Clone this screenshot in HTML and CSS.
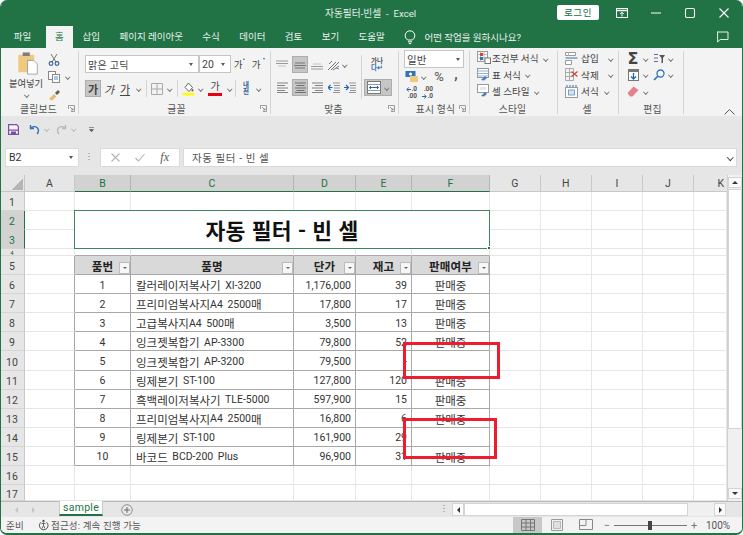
FILE: index.html
```html
<!DOCTYPE html>
<html lang="ko">
<head>
<meta charset="utf-8">
<title>자동필터-빈셀 - Excel</title>
<link rel="stylesheet" href="styles.css">
</head>
<body>
<div class="window">

  <header class="titlebar">
    <div class="doc-title">자동필터-빈셀 &nbsp;-&nbsp; Excel</div>
    <div class="login">로그인</div>
    <div class="winbtn first"><svg width="14" height="12" viewBox="0 0 14 12"><rect x="1.5" y="1.5" width="11" height="9" fill="none" stroke="#fff"/><path d="M1.5 3.5h11" stroke="#fff" stroke-width="1.5"/><path d="M7 9.5V5.5M5.2 7L7 5.2 8.8 7" fill="none" stroke="#fff"/></svg></div>
    <div class="winbtn"><svg width="12" height="12" viewBox="0 0 12 12"><path d="M1 6h10" stroke="#fff" stroke-width="1.2"/></svg></div>
    <div class="winbtn"><svg width="12" height="12" viewBox="0 0 12 12"><rect x="1.5" y="1.5" width="9" height="9" rx="1.5" fill="none" stroke="#fff" stroke-width="1.1"/></svg></div>
    <div class="winbtn"><svg width="12" height="12" viewBox="0 0 12 12"><path d="M1.5 1.5l9 9M10.5 1.5l-9 9" stroke="#fff" stroke-width="1.1"/></svg></div>
  </header>

  <nav class="tabs">
    <div class="tab">파일</div>
    <div class="tab home">홈</div>
    <div class="tab">삽입</div>
    <div class="tab">페이지 레이아웃</div>
    <div class="tab">수식</div>
    <div class="tab">데이터</div>
    <div class="tab">검토</div>
    <div class="tab">보기</div>
    <div class="tab">도움말</div>
    <div class="tell">
      <svg width="12" height="15" viewBox="0 0 12 15"><path d="M3.6 10C2.6 8.8 1.2 7.8 1.2 5.6a4.8 4.8 0 0 1 9.6 0c0 2.2-1.4 3.2-2.4 4.4z" fill="none" stroke="#fff"/><path d="M4 11.8h4M4.8 13.6h2.4" stroke="#fff"/></svg>
      <span>어떤 작업을 원하시나요?</span>
    </div>
    <div class="comment"><svg width="13" height="12" viewBox="0 0 13 12"><path d="M1 1h11v7.5H4.2L1.6 11V1z" fill="none" stroke="#e8f0ea"/></svg></div>
  </nav>

  <section class="ribbon">
    <div class="grp clip">
      <div class="grp-body clip-body">
        <div class="paste">
          <svg width="22" height="23" viewBox="0 0 24 26"><rect x="1" y="3" width="18" height="20" rx="1" fill="#f0c981"/><rect x="6" y="0.5" width="8" height="4" fill="#7d7d7d"/><path d="M11.5 9.5h7l4 4v11.5h-11z" fill="#fff" stroke="#8a8a8a" stroke-width=".8"/></svg>
          <div class="paste-text">붙여넣기</div>
          <i class="chev"></i>
        </div>
        <div class="clip-tools">
          <svg width="12" height="13" viewBox="0 0 12 13"><path d="M3 1l5 8M9 1L4 9" stroke="#777" fill="none"/><circle cx="3" cy="10.5" r="1.9" fill="none" stroke="#2f5f93" stroke-width="1.1"/><circle cx="9" cy="10.5" r="1.9" fill="none" stroke="#2f5f93" stroke-width="1.1"/></svg>
          <div class="copy-row">
            <svg width="12" height="12" viewBox="0 0 12 12"><rect x=".5" y=".5" width="7" height="8" fill="#fff" stroke="#888"/><rect x="4.5" y="3.5" width="7" height="8" fill="#fff" stroke="#888"/><path d="M6 6h4M6 8h4" stroke="#5b8fc4"/></svg>
            <i class="chev"></i>
          </div>
          <svg width="13" height="12" viewBox="0 0 13 12"><path d="M1 10l5-5 2.5 2.5L4 11.5z" fill="#e9bb6e"/><path d="M7 4l3-3 2 2-3 3z" fill="#5c5c5c"/></svg>
        </div>
      </div>
      <div class="grp-label"><span></span><span>클립보드</span><svg class="launch" width="7" height="7" viewBox="0 0 7 7"><path d="M.5 4V.5H6.500V6.500H3M2 2l3 3M5 3v2H3" fill="none" stroke="#888" stroke-width=".8"/></svg></div>
    </div>

    <div class="grp font">
      <div class="grp-body">
        <div class="row font-row1">
          <div class="select fontname"><span>맑은 고딕</span><b class="tri"></b></div>
          <div class="select fontsize"><span>20</span><b class="tri"></b></div>
          <div class="slot w14 grow"><span>가</span><sup class="up"></sup></div>
          <div class="slot w22 grow"><span>가</span><sup class="down"></sup></div>
        </div>
        <div class="row font-row2">
          <div class="slot w16 tile bold">가</div>
          <div class="slot w16 italic">가</div>
          <div class="slot w16 under">가</div>
          <div class="slot w12"><i class="chev"></i></div>
          <div class="vsep ml1"></div>
          <div class="slot w19"><svg width="12" height="12" viewBox="0 0 12 12"><path d="M.5.5h11v11H.5zM6 .5v11M.5 6h11" fill="none" stroke="#aaa"/></svg></div>
          <div class="slot w8"><i class="chev"></i></div>
          <div class="vsep ml3"></div>
          <div class="slot w20"><svg width="13" height="14" viewBox="0 0 13 14"><path d="M6.500 1l4 4.500-3.500 4-4-4z" fill="#fff" stroke="#666"/><path d="M.5 11h12v2.500H.5z" fill="#ffff00"/><path d="M10.500 6.500c.8 1 1 1.500 1 2a1 1 0 0 1-2 0c0-.5.2-1 1-2z" fill="#666"/></svg></div>
          <div class="slot w5"><i class="chev"></i></div>
          <div class="slot w24 color"><span>가</span></div>
          <div class="slot w5"><i class="chev"></i></div>
          <div class="vsep ml3"></div>
          <div class="slot w20 phon"><span>내<br>천</span></div>
          <div class="slot w6"><i class="chev"></i></div>
        </div>
      </div>
      <div class="grp-label"><span></span><span>글꼴</span><svg class="launch" width="7" height="7" viewBox="0 0 7 7"><path d="M.5 4V.5H6.500V6.500H3M2 2l3 3M5 3v2H3" fill="none" stroke="#888" stroke-width=".8"/></svg></div>
    </div>

    <div class="grp align">
      <div class="grp-body align-body">
        <div class="align-main">
          <div class="row">
            <div class="slot w20"><svg width="12" height="10" viewBox="0 0 12 10"><path d="M0 1h12M0 3.500h12" stroke="#9a9a9a"/><path d="M2 6h8" stroke="#c4c4c4"/></svg></div>
            <div class="slot w16 tile"><svg width="12" height="10" viewBox="0 0 12 10"><path d="M1 3h10M0 5.500h12M1 8h10" stroke="#777"/></svg></div>
            <div class="slot w18"><svg width="12" height="10" viewBox="0 0 12 10"><path d="M2 4h8" stroke="#c4c4c4"/><path d="M0 6.500h12M0 9h12" stroke="#9a9a9a"/></svg></div>
            <div class="slot w16"><svg width="14" height="12" viewBox="0 0 14 12"><path d="M1 11L9 3M4 11l8-8M2 5l3-3M6 11l6-4" fill="none" stroke="#777"/><path d="M9 9l3 1" stroke="#5b8fc4"/></svg></div>
            <div class="slot w6"><i class="chev"></i></div>
          </div>
          <div class="row align-row2">
            <div class="slot w20"><svg width="11" height="11" viewBox="0 0 11 11"><path d="M0 1h11M0 3.500h8M0 6h11M0 8.500h8M0 10.500h11" stroke="#777" stroke-width=".9"/></svg></div>
            <div class="slot w16 tile"><svg width="11" height="11" viewBox="0 0 11 11"><path d="M0 1h11M1.500 3.500h8M0 6h11M1.500 8.500h8M0 10.500h11" stroke="#666" stroke-width=".9"/></svg></div>
            <div class="slot w18"><svg width="11" height="11" viewBox="0 0 11 11"><path d="M0 1h11M3 3.500h8M0 6h11M3 8.500h8M0 10.500h11" stroke="#777" stroke-width=".9"/></svg></div>
            <div class="slot w16"><svg width="12" height="11" viewBox="0 0 12 11"><path d="M5 1h7M6 3.500h6M6 6h6M6 8.500h6M5 10.500h7" stroke="#888" stroke-width=".9"/><path d="M0 5.500h4.500M2.500 3L0 5.500 2.500 8" fill="none" stroke="#1f66b0" stroke-width="1.200"/></svg></div>
            <div class="slot w15"><svg width="12" height="11" viewBox="0 0 12 11"><path d="M5 1h7M6 3.500h6M6 6h6M6 8.500h6M5 10.500h7" stroke="#888" stroke-width=".9"/><path d="M0 5.500h4.500M2 3l2.500 2.500L2 8" fill="none" stroke="#1f66b0" stroke-width="1.200"/></svg></div>
          </div>
        </div>
        <div class="vsep tall"></div>
        <div class="align-side">
          <div class="wrap-ic"><span>가나</span><span class="wrap-b">다↵</span></div>
          <div class="merge tile">
            <svg width="14" height="13" viewBox="0 0 14 13"><rect x=".5" y=".5" width="13" height="12" fill="#fff" stroke="#777"/><path d="M.5 3.500h13M.5 9.500h13" stroke="#999"/><path d="M2.500 6.500h9" stroke="#1f66b0"/><path d="M4 5L2.500 6.500 4 8M10 5l1.500 1.500L10 8" fill="none" stroke="#1f66b0"/></svg>
            <i class="chev"></i>
          </div>
        </div>
      </div>
      <div class="grp-label"><span></span><span>맞춤</span><svg class="launch" width="7" height="7" viewBox="0 0 7 7"><path d="M.5 4V.5H6.500V6.500H3M2 2l3 3M5 3v2H3" fill="none" stroke="#888" stroke-width=".8"/></svg></div>
    </div>

    <div class="grp number">
      <div class="grp-body number-body">
        <div class="select numfmt"><span>일반</span><b class="tri"></b></div>
        <div class="row number-row">
          <div class="slot w14"><svg width="13" height="12" viewBox="0 0 13 12"><rect x=".5" y="1" width="10" height="6" fill="#2f75b5"/><circle cx="5.500" cy="4" r="1.600" fill="#fff"/><rect x="5" y="6" width="8" height="6" fill="#f0c981"/></svg></div>
          <div class="slot w12"><i class="chev"></i></div>
          <div class="slot w18 pct">%</div>
          <div class="slot w16 comma">,</div>
        </div>
        <div class="row number-row">
          <div class="slot w16 deci">
            <span class="deci-line"><svg width="5" height="5" viewBox="0 0 5 5"><path d="M5 2.500H.8M2.800.6L.8 2.500l2 1.900" fill="none" stroke="#1f66b0"/></svg>.0</span>
            <span class="deci-line">.00</span>
          </div>
          <div class="slot w16 deci">
            <span class="deci-line">.00</span>
            <span class="deci-line"><svg width="5" height="5" viewBox="0 0 5 5"><path d="M0 2.500h4.200M2.200.6l2 1.900-2 1.900" fill="none" stroke="#1f66b0"/></svg>.0</span>
          </div>
        </div>
      </div>
      <div class="grp-label"><span></span><span>표시 형식</span><svg class="launch" width="7" height="7" viewBox="0 0 7 7"><path d="M.5 4V.5H6.500V6.500H3M2 2l3 3M5 3v2H3" fill="none" stroke="#888" stroke-width=".8"/></svg></div>
    </div>

    <div class="grp style">
      <div class="grp-body list-body">
        <div class="item"><svg width="14" height="13" viewBox="0 0 14 13"><rect x=".5" y=".5" width="10" height="10" fill="#fff" stroke="#999"/><path d="M3.500.5v10M7 .5v10M.5 3.500h10M.5 7h10" stroke="#bbb"/><rect x="3" y="2" width="3" height="3" fill="#d04a3a"/><rect x="3" y="6" width="3" height="3" fill="#2f75b5"/><rect x="8" y="7" width="5.500" height="5.500" fill="#fff" stroke="#777"/></svg><span>조건부 서식</span><i class="chev"></i></div>
        <div class="item"><svg width="14" height="13" viewBox="0 0 14 13"><rect x=".5" y=".5" width="11" height="9" fill="#fff" stroke="#999"/><path d="M.5 3h11M.5 5.500h11M.5 8h11" stroke="#8fb4d9"/><path d="M4 12l4-4 2 2-3 2.500z" fill="#4d7fb5"/></svg><span>표 서식</span><i class="chev"></i></div>
        <div class="item"><svg width="14" height="13" viewBox="0 0 14 13"><rect x=".5" y=".5" width="11" height="8" fill="#fff" stroke="#999"/><path d="M3 3h6v3H3z" fill="#dfe7ef"/><path d="M4 12l4-4 2 2-3 2.500z" fill="#4d7fb5"/></svg><span>셀 스타일</span><i class="chev"></i></div>
      </div>
      <div class="grp-label"><span></span><span>스타일</span><span></span></div>
    </div>

    <div class="grp cells">
      <div class="grp-body list-body">
        <div class="item"><svg width="13" height="13" viewBox="0 0 13 13"><path d="M.5.5h10v3H.5zM.5 8.500h6v4h-6z" fill="#fff" stroke="#999"/><path d="M.5 6h12" stroke="#2f75b5"/><path d="M3.500.5v3" stroke="#bbb"/></svg><span>삽입</span><i class="chev"></i></div>
        <div class="item"><svg width="13" height="13" viewBox="0 0 13 13"><path d="M.5.500h8v12h-8zM.5 4.500h8M.5 8.500h8M4.500.5v12" fill="none" stroke="#aaa"/><path d="M6.500 3.500l6 5M12.500 3.500l-6 5" stroke="#d04a3a" stroke-width="1.300"/></svg><span>삭제</span><i class="chev"></i></div>
        <div class="item"><svg width="13" height="13" viewBox="0 0 13 13"><rect x=".5" y="2.500" width="12" height="10" fill="#fff" stroke="#999"/><rect x="3.500" y="5" width="6" height="5" fill="#d5e3f1" stroke="#4d7fb5" stroke-width=".7"/><path d="M1 1h11" stroke="#2f75b5" stroke-dasharray="2 1"/></svg><span>서식</span><i class="chev short"></i></div>
      </div>
      <div class="grp-label"><span></span><span>셀</span><span></span></div>
    </div>

    <div class="grp edit">
      <div class="grp-body edit-body">
        <div class="row edit-row">
          <div class="slot w18 sigma">Σ</div>
          <div class="slot w8"><i class="chev"></i></div>
          <div class="slot w18"><svg width="11" height="11" viewBox="0 0 11 11"><path d="M0 1.500h4M0 5h4M0 8.500h4" stroke="#7a5ea8"/><path d="M5 2h6L9 5v4.500L7.500 10.500V5z" fill="#555"/></svg></div>
          <div class="slot w6"><i class="chev"></i></div>
        </div>
        <div class="row edit-row">
          <div class="slot w18"><svg width="11" height="12" viewBox="0 0 11 12"><rect x=".5" y=".5" width="10" height="11" fill="#fff" stroke="#777"/><path d="M.5 2h10" stroke="#777" stroke-width="2"/><path d="M5.500 4v6M3 7.500l2.500 2.500L8 7.500" fill="none" stroke="#1f66b0" stroke-width="1.300"/></svg></div>
          <div class="slot w8"><i class="chev"></i></div>
          <div class="slot w18"><svg width="12" height="12" viewBox="0 0 12 12"><circle cx="7.500" cy="4.500" r="3.500" fill="none" stroke="#2f75b5" stroke-width="1.300"/><path d="M5 7L1 11" stroke="#2f75b5" stroke-width="1.700"/></svg></div>
          <div class="slot w6"><i class="chev"></i></div>
        </div>
        <div class="row edit-row">
          <div class="slot w18"><svg width="12" height="11" viewBox="0 0 12 11"><path d="M.5 7l6-6.500 5 3.500-6 6.500H3z" fill="#e8808c"/></svg></div>
          <div class="slot w8"><i class="chev"></i></div>
        </div>
      </div>
      <div class="grp-label"><span></span><span>편집</span><span></span></div>
    </div>

    <div class="collapse"><svg width="11" height="6" viewBox="0 0 11 6"><path d="M.5 5.500l5-5 5 5" fill="none" stroke="#555"/></svg></div>
  </section>

  <section class="strip">
    <div class="qat">
      <svg width="11" height="11" viewBox="0 0 11 11"><path d="M.6.6h8l1.800 1.800v8H.6z" fill="#f6f2fa" stroke="#7a4fa3" stroke-width="1.200"/><path d="M.6 6.200h9.800" stroke="#7a4fa3" stroke-width="1.200"/><path d="M3 7.500h5v3H3z" fill="#7a4fa3"/></svg>
      <svg class="undo" width="11" height="11" viewBox="0 0 11 11"><path d="M1.500 1v3.500H5M1.800 4.300C3 2.500 6 2 8 3.500c2 1.600 2 4.500 0 6.500" fill="none" stroke="#2f75b5" stroke-width="1.400"/></svg>
      <i class="chev faint"></i>
      <svg class="redo" width="11" height="11" viewBox="0 0 11 11"><path d="M9.500 1v3.500H6M9.200 4.300C8 2.500 5 2 3 3.500 1 5.100 1 8 3 10" fill="none" stroke="#b9b9b9" stroke-width="1.400"/></svg>
      <i class="chev faint"></i>
      <svg class="qat-more" width="5" height="5" viewBox="0 0 5 5"><path d="M0 .5h5M.5 2.500h4L2.500 4.800z" stroke="#555" stroke-width=".6" fill="#555"/></svg>
    </div>
    <div class="formula">
      <div class="namebox"><span>B2</span><b class="tri"></b></div>
      <div class="fdots"></div>
      <div class="fbtns">
        <svg width="9" height="9" viewBox="0 0 9 9"><path d="M.5.5l8 8M8.500.5l-8 8" stroke="#b5b5b5" stroke-width="1.100"/></svg>
        <svg width="10" height="9" viewBox="0 0 10 9"><path d="M.5 5l3 3L9.500 1" fill="none" stroke="#b5b5b5" stroke-width="1.100"/></svg>
        <span class="fx">fx</span>
      </div>
      <div class="finput"><span>자동 필터 - 빈 셀</span><i class="chev dark"></i></div>
    </div>
  </section>

  <section class="sheetwrap">
    <div class="sheet">
      <div class="corner"></div>
      <div class="ch">A</div>
      <div class="ch sel">B</div>
      <div class="ch sel">C</div>
      <div class="ch sel">D</div>
      <div class="ch sel">E</div>
      <div class="ch sel">F</div>
      <div class="ch">G</div>
      <div class="ch">H</div>
      <div class="ch">I</div>
      <div class="ch">J</div>
      <div class="ch kh">K</div>

      <div class="rh">1</div><div class="g"></div><div class="g"></div><div class="g"></div><div class="g"></div><div class="g"></div><div class="g"></div><div class="g"></div><div class="g"></div><div class="g"></div><div class="g"></div><div class="g"></div>
      <div class="rh rsel">2</div><div class="g"></div>
      <div class="merged">자동 필터 - 빈 셀</div>
      <div class="g"></div><div class="g"></div><div class="g"></div><div class="g"></div><div class="g"></div>
      <div class="rh rsel">3</div><div class="g"></div><div class="g"></div><div class="g"></div><div class="g"></div><div class="g"></div><div class="g"></div>
      <div class="rh r4">4</div><div class="g"></div><div class="g tb"></div><div class="g tb"></div><div class="g tb"></div><div class="g tb"></div><div class="g tb"></div><div class="g"></div><div class="g"></div><div class="g"></div><div class="g"></div><div class="g"></div>

      <div class="rh">5</div><div class="g tl"></div>
      <div class="t th">품번<b class="fbtn"></b></div><div class="t th">품명<b class="fbtn"></b></div><div class="t th">단가<b class="fbtn"></b></div><div class="t th">재고<b class="fbtn"></b></div><div class="t th">판매여부<b class="fbtn"></b></div>
      <div class="g"></div><div class="g"></div><div class="g"></div><div class="g"></div><div class="g"></div>

      <div class="rh">6</div><div class="g tl"></div>
      <div class="t ctr">1</div><div class="t txt"><span class="k">칼러레이저복사기</span> XI-3200</div><div class="t num">1,176,000</div><div class="t num">39</div><div class="t ctr"><span class="k">판매중</span></div>
      <div class="g"></div><div class="g"></div><div class="g"></div><div class="g"></div><div class="g"></div>

      <div class="rh">7</div><div class="g tl"></div>
      <div class="t ctr">2</div><div class="t txt"><span class="k">프리미엄복사지</span>A4 2500<span class="k">매</span></div><div class="t num">17,800</div><div class="t num">17</div><div class="t ctr"><span class="k">판매중</span></div>
      <div class="g"></div><div class="g"></div><div class="g"></div><div class="g"></div><div class="g"></div>

      <div class="rh">8</div><div class="g tl"></div>
      <div class="t ctr">3</div><div class="t txt"><span class="k">고급복사지</span>A4 500<span class="k">매</span></div><div class="t num">3,500</div><div class="t num">13</div><div class="t ctr"><span class="k">판매중</span></div>
      <div class="g"></div><div class="g"></div><div class="g"></div><div class="g"></div><div class="g"></div>

      <div class="rh">9</div><div class="g tl"></div>
      <div class="t ctr">4</div><div class="t txt"><span class="k">잉크젯복합기</span> AP-3300</div><div class="t num">79,800</div><div class="t num">52</div><div class="t ctr"><span class="k">판매중</span></div>
      <div class="g"></div><div class="g"></div><div class="g"></div><div class="g"></div><div class="g"></div>

      <div class="rh">10</div><div class="g tl"></div>
      <div class="t ctr">5</div><div class="t txt"><span class="k">잉크젯복합기</span> AP-3200</div><div class="t num">79,500</div><div class="t num">-</div><div class="t ctr"></div>
      <div class="g"></div><div class="g"></div><div class="g"></div><div class="g"></div><div class="g"></div>

      <div class="rh">11</div><div class="g tl"></div>
      <div class="t ctr">6</div><div class="t txt"><span class="k">링제본기</span> ST-100</div><div class="t num">127,800</div><div class="t num">120</div><div class="t ctr"><span class="k">판매중</span></div>
      <div class="g"></div><div class="g"></div><div class="g"></div><div class="g"></div><div class="g"></div>

      <div class="rh">12</div><div class="g tl"></div>
      <div class="t ctr">7</div><div class="t txt"><span class="k">흑백레이저복사기</span> TLE-5000</div><div class="t num">597,900</div><div class="t num">15</div><div class="t ctr"><span class="k">판매중</span></div>
      <div class="g"></div><div class="g"></div><div class="g"></div><div class="g"></div><div class="g"></div>

      <div class="rh">13</div><div class="g tl"></div>
      <div class="t ctr">8</div><div class="t txt"><span class="k">프리미엄복사지</span>A4 2500<span class="k">매</span></div><div class="t num">16,800</div><div class="t num">6</div><div class="t ctr"><span class="k">판매중</span></div>
      <div class="g"></div><div class="g"></div><div class="g"></div><div class="g"></div><div class="g"></div>

      <div class="rh">14</div><div class="g tl"></div>
      <div class="t ctr">9</div><div class="t txt"><span class="k">링제본기</span> ST-100</div><div class="t num">161,900</div><div class="t num">29</div><div class="t ctr"></div>
      <div class="g"></div><div class="g"></div><div class="g"></div><div class="g"></div><div class="g"></div>

      <div class="rh">15</div><div class="g tl"></div>
      <div class="t ctr">10</div><div class="t txt"><span class="k">바코드</span> BCD-200 Plus</div><div class="t num">96,900</div><div class="t num">31</div><div class="t ctr"><span class="k">판매중</span></div>
      <div class="g"></div><div class="g"></div><div class="g"></div><div class="g"></div><div class="g"></div>

      <div class="rh">16</div><div class="g"></div><div class="g"></div><div class="g"></div><div class="g"></div><div class="g"></div><div class="g"></div><div class="g"></div><div class="g"></div><div class="g"></div><div class="g"></div><div class="g"></div>
      <div class="rh">17</div><div class="g"></div><div class="g"></div><div class="g"></div><div class="g"></div><div class="g"></div><div class="g"></div><div class="g"></div><div class="g"></div><div class="g"></div><div class="g"></div><div class="g"></div>

      <div class="redbox one"></div>
      <div class="redbox two"></div>
    </div>
    <aside class="vscroll">
      <div class="sbtn"><b class="arr up"></b></div>
      <div class="vthumb"></div>
      <div class="sbtn"><b class="arr down"></b></div>
    </aside>
  </section>

  <section class="tabbar">
    <div class="tabnav"><b class="arr left faint"></b><b class="arr right faint"></b></div>
    <div class="sheettab">sample</div>
    <div class="addsheet"><svg width="12" height="12" viewBox="0 0 12 12"><circle cx="6" cy="6" r="5.300" fill="none" stroke="#888" stroke-width=".9"/><path d="M3.200 6h5.600M6 3.200v5.600" stroke="#666"/></svg></div>
    <div class="tdots"></div>
    <div class="hscroll">
      <div class="sbtn h"><b class="arr left"></b></div>
      <div class="hthumb"></div>
      <div class="sbtn h"><b class="arr right"></b></div>
    </div>
  </section>

  <footer class="status">
    <span class="ready">준비</span>
    <svg class="acc" width="11" height="12" viewBox="0 0 11 12"><path d="M3 3.200a4.300 4.300 0 1 0 5.500 0" fill="none" stroke="#555"/><circle cx="5.500" cy="2" r="1.200" fill="#555"/><path d="M5.500 3.500v3M3.500 4.500h4M5.500 6.500l-1.500 3M5.500 6.500l1.500 3" stroke="#555" stroke-width=".9" fill="none"/></svg>
    <span class="access">접근성: 계속 진행 가능</span>
    <div class="views">
      <div class="view on"><svg width="14" height="12" viewBox="0 0 14 12"><path d="M.5.500h13v11H.5zM.5 4h13M.5 8h13M5 .5v11M9.500.5v11" fill="none" stroke="#777"/></svg></div>
      <div class="view"><svg width="12" height="12" viewBox="0 0 12 12"><path d="M.5.500h11v11H.5z" fill="none" stroke="#999"/><path d="M2.500 2.500h7v7h-7z" fill="#e0e0e0" stroke="#aaa" stroke-width=".8"/></svg></div>
      <div class="view"><svg width="14" height="12" viewBox="0 0 14 12"><path d="M.5.500h13v10H.5zM7 .5v6M.5 6.500H7" fill="none" stroke="#888"/></svg></div>
    </div>
    <div class="zoom">
      <span class="zb">−</span>
      <div class="slider"><b></b></div>
      <span class="zb">+</span>
      <span class="pct-label">100%</span>
    </div>
  </footer>
</div>
</body>
</html>
```

FILE: styles.css
```css
* { box-sizing: border-box; }
html, body { margin: 0; padding: 0; background: #fff; }
body { font-family: Roboto, "Noto Sans CJK KR", sans-serif; font-size: 10px; color: #444; }
sup, b, i { display: block; }

.window {
  width: 743px; height: 535px; display: flex; flex-direction: column; overflow: hidden;
  background: #f3f3f3; border-left: 1px solid #217346; border-right: 1px solid #217346; border-bottom: 2px solid #217346;
  border-radius: 7px;
}

.titlebar { height: 25px; background: #217346; display: flex; align-items: center; color: #fff; flex: none; padding-left: 324px; }
.doc-title { width: 232px; font-size: 9.7px; color: #e4efe8; }
.login { width: 42px; height: 15px; background: #fff; color: #217346; border-radius: 2px; font-size: 9.5px; letter-spacing: .6px; text-align: center; line-height: 15px; }
.winbtn { width: 34px; height: 25px; display: flex; align-items: center; justify-content: center; }
.winbtn.first { margin-left: 6px; }

.tabs { height: 23px; background: #217346; display: flex; align-items: flex-end; color: #eaf2ed; flex: none; padding-left: 3px; font-size: 9.5px; }
.tab { height: 22px; line-height: 21px; padding: 0 9.7px; white-space: nowrap; }
.tab.home { background: #f3f3f3; color: #217346; margin-left: 5px; width: 27px; padding: 0; text-align: center; }
.tell { display: flex; align-items: center; height: 22px; margin-left: 10px; gap: 8px; }
.comment { margin-left: auto; margin-right: 13px; height: 22px; display: flex; align-items: center; }

.ribbon { height: 68px; flex: none; background: #f3f3f3; display: flex; position: relative; }
.grp { display: flex; flex-direction: column; margin: 3px 0 2px; border-right: 1px solid #d4d4d4; flex: none; }
.clip { width: 78px; }
.font { width: 192px; }
.align { width: 128px; }
.number { width: 71px; }
.style { width: 88px; }
.cells { width: 61px; }
.edit { width: 65px; }
.grp-body { flex: 1; min-height: 0; }
.grp-label { height: 13px; margin-bottom: -2px; display: grid; grid-template-columns: 1fr auto 1fr; align-items: center; font-size: 9.8px; color: #555; letter-spacing: .2px; line-height: 13px; padding-right: 2px; }
.launch { justify-self: end; margin-right: 1px; margin-bottom: 2px; }
.row { display: flex; align-items: center; }
.slot { display: flex; align-items: center; justify-content: center; height: 17px; flex: none; position: relative; }
.w5 { width: 5px; } .w6 { width: 6px; } .w8 { width: 8px; } .w12 { width: 12px; } .w14 { width: 14px; } .w15 { width: 15px; }
.w16 { width: 16px; } .w18 { width: 18px; } .w19 { width: 19px; } .w20 { width: 20px; } .w22 { width: 22px; } .w24 { width: 24px; }
.tile { background: #c6c6c6; border: 1px solid #adadad; }
.chev { width: 3.5px; height: 3.5px; border-right: 1px solid #777; border-bottom: 1px solid #777; transform: rotate(45deg); flex: none; }
.chev.faint { border-color: #bbb; }
.chev.dark { border-color: #444; width: 4.5px; height: 4.5px; }
.tri { width: 0; height: 0; border-left: 2.5px solid transparent; border-right: 2.5px solid transparent; border-top: 3px solid #555; margin-left: auto; }
.vsep { width: 1px; height: 17px; background: #d4d4d4; flex: none; }
.ml1 { margin-left: 1px; } .ml3 { margin-left: 3px; }

.clip-body { display: flex; padding-left: 16px; }
.paste { width: 30px; display: flex; flex-direction: column; align-items: flex-start; padding-top: 1px; }
.paste-text { white-space: nowrap; font-size: 9.3px; margin: 2px 0 0 -11px; line-height: 13px; width: 40px; text-align: center; flex: none; }
.paste .chev { margin: 3px 0 0 8px; }
.clip-tools { display: flex; flex-direction: column; align-items: flex-start; margin-left: 1px; padding-top: 2px; gap: 5px; }
.clip-tools > svg:last-child { margin-top: 1px; }
.copy-row { display: flex; align-items: center; gap: 6px; }

.font { padding-left: 6px; }
.font-row1 { margin-top: 4px; height: 18px; }
.select { background: #fff; border: 1px solid #c6c6c6; height: 18px; display: flex; align-items: center; padding: 0 5px 0 2px; font-size: 10px; flex: none; }
.fontname { width: 114px; letter-spacing: .3px; }
.fontsize { width: 32px; font-size: 10.5px; }
.grow { font-size: 9.5px; }
.grow sup { position: absolute; top: 2px; right: 0; width: 0; height: 0; border-left: 1.5px solid transparent; border-right: 1.5px solid transparent; }
.grow .up { border-bottom: 2.5px solid #2f75b5; }
.w22.grow .down { right: 2px; border-top: 2.5px solid #2f75b5; }
.font-row2 { margin-top: 7px; }
.bold { font-weight: 700; font-size: 11px; }
.italic { font-style: italic; font-size: 11px; }
.under { text-decoration: underline; font-size: 11px; }
.color span { font-size: 10px; border-bottom: 3px solid #e8000e; line-height: 10px; padding: 0 2px; height: 14px; width: 14px; text-align: center; }
.phon span { font-size: 6.5px; line-height: 7px; color: #2d5f8f; font-weight: 700; text-align: center; }

.align-body { display: flex; padding-top: 5px; }
.align-main { width: 90px; padding-left: 1px; }
.align-row2 { margin-top: 6px; }
.vsep.tall { height: 44px; margin-top: -1px; }
.align-side { padding-left: 2px; }
.wrap-ic { height: 17px; width: 26px; display: flex; flex-direction: column; align-items: center; font-size: 6.5px; line-height: 7px; font-weight: 700; color: #555; padding-top: 2px; }
.wrap-b { color: #2d6cae; }
.merge { width: 28px; height: 17px; margin-top: 6px; display: flex; align-items: center; padding-left: 2px; gap: 4px; }

.number { padding-left: 5px; }
.numfmt { width: 60px; margin-top: -1px; padding-right: 3px; font-size: 10.5px; height: 18px; }
.number-row { height: 16.5px; }
.number-row .slot { height: 16px; }
.pct { font-size: 13px; color: #555; }
.comma { font-size: 14px; font-weight: 700; color: #555; line-height: 10px; padding-bottom: 4px; }
.deci { flex-direction: column; font-size: 6.5px; line-height: 6.5px; font-weight: 700; color: #555; align-items: flex-end; padding-right: 3px; }
.deci-line { display: flex; align-items: center; }

.list-body { padding: 0 0 0 4px; margin-top: -1px; display: flex; flex-direction: column; }
.item { height: 16.5px; display: flex; align-items: center; font-size: 9.6px; flex: none; white-space: nowrap; }
.item svg { flex: none; }
.item .chev { margin-left: 5px; }
.style .list-body { padding-left: 7px; }
.style .item svg { margin: -1px 1px 0 0; }
.cells .item svg { margin: 0 3px 0 3px; }
.cells .item span { letter-spacing: .2px; }
.cells .item .chev { margin-left: 10px; }
.cells .item .chev.short { margin-left: 6px; }

.edit { padding-left: 5px; }
.edit-body { margin-top: -1px; }
.edit-row { height: 16.5px; }
.sigma { font-size: 16px; color: #444; font-weight: 700; font-family: "DejaVu Sans", sans-serif; }
.collapse { position: absolute; right: 7px; bottom: 2px; height: 8px; }

.strip { height: 59px; background: #e6e6e6; flex: none; }
.qat { height: 24px; padding: 2px 0 0 7px; display: flex; align-items: center; }
.undo { margin-left: 10px; }
.qat .chev { margin-left: 5px; }
.redo { margin-left: 7px; }
.qat-more { margin-left: 14px; }
.formula { display: flex; height: 19px; margin-top: 8px; padding-left: 4px; }
.namebox { width: 74px; height: 19px; background: #fff; border: 1px solid #dadada; display: flex; align-items: center; padding: 0 5px 0 3px; font-size: 10.5px; color: #333; }
.fdots { width: 2px; height: 9px; margin: 5px 10px 0 9px; background: repeating-linear-gradient(#b5b5b5 0 1px, transparent 1px 3px); }
.fbtns { width: 80px; height: 19px; background: #fff; border: 1px solid #dadada; display: flex; align-items: center; padding: 0 10px; justify-content: space-between; }
.fx { font-family: "Liberation Serif", serif; font-style: italic; font-size: 12px; color: #555; }
.finput { flex: 1; height: 19px; margin: 0 5px 0 3px; background: #fff; border: 1px solid #dadada; display: flex; align-items: center; padding: 0 4px 0 8px; justify-content: space-between; font-size: 10.5px; letter-spacing: .55px; color: #555; }

.sheetwrap { flex: 1; min-height: 0; display: flex; background: #fff; }
.sheet {
  position: relative; flex: none; width: 726px; height: 326px; display: grid; overflow: hidden;
  grid-template-columns: 24px 50px 56px 163px 62px 56px 78px 50.5px 51.5px 51px 51px 33px;
  grid-template-rows: 17px 19px 19px 19px 7px repeat(12, 19.1px) 1fr;
  font-size: 10.5px; color: #333;
}
.corner { background: #e6e6e6 linear-gradient(135deg, transparent 55%, #b5b5b5 55%) no-repeat 9px 2px / 13px 13px; border-right: 1px solid #c6c6c6; border-bottom: 1px solid #c6c6c6; }
.ch { background: #e6e6e6; display: flex; align-items: center; justify-content: center; border-right: 1px solid #c8c8c8; border-bottom: 1px solid #c8c8c8; color: #444; }
.ch.sel { background: #d2d2d2; color: #217346; border-bottom: 1px solid #217346; border-right-color: #b4b4b4; }
.ch.kh { border-right: 0; justify-content: flex-end; padding-right: 3px; }
.rh { background: #e6e6e6; display: flex; align-items: center; justify-content: center; border-right: 1px solid #c8c8c8; border-bottom: 1px solid #d4d4d4; color: #444; padding: 3px 1px 0 0; overflow: hidden; }
.rh.rsel { background: #d2d2d2; color: #217346; border-right: 1px solid #217346; }
.rh.r4 { line-height: 7px; align-items: flex-start; font-size: 6px; padding-top: 0; }
.g { border-right: 1px solid #e6e6e6; border-bottom: 1px solid #e6e6e6; }
.g.tl { border-right-color: #a8a8a8; }
.g.tb { border-bottom-color: #a8a8a8; }
.t { border-right: 1px solid #a8a8a8; border-bottom: 1px solid #a8a8a8; display: flex; align-items: center; white-space: pre; position: relative; padding-top: 2px; }
.th { background: #d9d9d9; justify-content: center; font-family: "Noto Sans CJK KR", sans-serif; font-size: 11.5px; font-weight: 700; color: #222; letter-spacing: .15px; padding-top: 1px; }
.ctr { justify-content: center; }
.txt { padding-left: 5px; word-spacing: 2px; }
.num { justify-content: flex-end; padding-right: 4px; }
.k { font-family: "Noto Sans CJK KR", sans-serif; font-size: 11.5px; }
.fbtn { position: absolute; right: 0; bottom: 0; width: 11px; height: 12px; background: #f6f6f6; border: 1px solid #bcbcbc; }
.fbtn::after { content: ""; position: absolute; left: 3px; top: 4px; border-left: 2px solid transparent; border-right: 2px solid transparent; border-top: 2.5px solid #666; }
.merged {
  grid-column: span 5; grid-row: span 2; margin: -1px 0 0 -1px; background: #fff; border: 1px solid #3c8560;
  display: flex; align-items: center; justify-content: center; position: relative;
  font-family: "Noto Sans CJK KR", sans-serif; font-weight: 700; font-size: 21.5px; color: #111; letter-spacing: .2px;
}
.merged::after { content: ""; position: absolute; right: -2px; bottom: -2px; background: #217346; border: 1px solid #fff; box-sizing: content-box; width: 2px; height: 2px; }
.redbox { position: absolute; border: 3px solid #ee1c2c; }
.redbox.one { left: 402px; top: 167px; width: 97px; height: 37px; }
.redbox.two { left: 402px; top: 243px; width: 94px; height: 41px; }

.vscroll { width: 15px; flex: none; background: #f0f0f0; border-left: 1px solid #d0d0d0; display: flex; flex-direction: column; padding: 2px 0; }
.sbtn { height: 11px; flex: none; background: #fafafa; display: flex; align-items: center; justify-content: center; border: 1px solid #d4d4d4; }
.vscroll .sbtn:last-child { margin-top: auto; }
.vthumb { height: 240px; background: #fff; border: 1px solid #d4d4d4; margin-top: 1px; }
.arr { width: 0; height: 0; }
.arr.up { border-left: 3px solid transparent; border-right: 3px solid transparent; border-bottom: 3.5px solid #333; }
.arr.down { border-left: 3px solid transparent; border-right: 3px solid transparent; border-top: 3.5px solid #333; }
.arr.left { border-top: 3px solid transparent; border-bottom: 3px solid transparent; border-right: 3.5px solid #333; }
.arr.right { border-top: 3px solid transparent; border-bottom: 3px solid transparent; border-left: 3.5px solid #333; }
.arr.left.faint { border-right-color: #c4c4c4; }
.arr.right.faint { border-left-color: #c4c4c4; }

.tabbar { height: 16px; flex: none; background: #e6e6e6; border-top: 1px solid #b9b9b9; display: flex; align-items: flex-start; }
.tabnav { width: 58px; height: 15px; display: flex; align-items: center; gap: 14px; padding-left: 14px; }
.sheettab { width: 44px; height: 15px; margin-top: -1px; background: #fff; color: #217346; border-bottom: 2px solid #217346; border-left: 1px solid #c8c8c8; border-right: 1px solid #c8c8c8; font-size: 10.5px; text-align: center; line-height: 14px; letter-spacing: .3px; }
.addsheet { margin-left: 18px; height: 15px; display: flex; align-items: center; }
.tdots { width: 2px; height: 9px; margin: 3px 0 0 310px; background: repeating-linear-gradient(#b5b5b5 0 1px, transparent 1px 3px); }
.hscroll { margin: 1px 15px 0 7px; width: 274px; height: 13px; display: flex; background: #f0f0f0; flex: none; }
.sbtn.h { width: 12px; height: 13px; }
.hthumb { width: 224px; height: 13px; background: #fff; border: 1px solid #d4d4d4; margin-right: auto; }

.status { height: 16px; flex: none; background: #f3f3f3; display: flex; align-items: center; font-size: 9.5px; color: #555; padding-left: 5px; }
.ready { width: 32px; letter-spacing: .3px; }
.access { margin-left: 2px; letter-spacing: .15px; }
.views { margin-left: auto; display: flex; height: 16px; }
.view { width: 29px; height: 16px; display: flex; align-items: center; justify-content: center; }
.view.on { background: #c8c8c8; }
.zoom { display: flex; align-items: center; width: 142px; padding-left: 2px; height: 16px; }
.zb { width: 10px; font-size: 11px; text-align: center; color: #777; }
.slider { width: 73px; height: 1px; background: #777; position: relative; margin: 0 2px; }
.slider b { position: absolute; left: 34px; top: -4px; width: 4px; height: 9px; background: #444; }
.pct-label { margin-left: 7px; font-size: 10px; color: #555; }
```
